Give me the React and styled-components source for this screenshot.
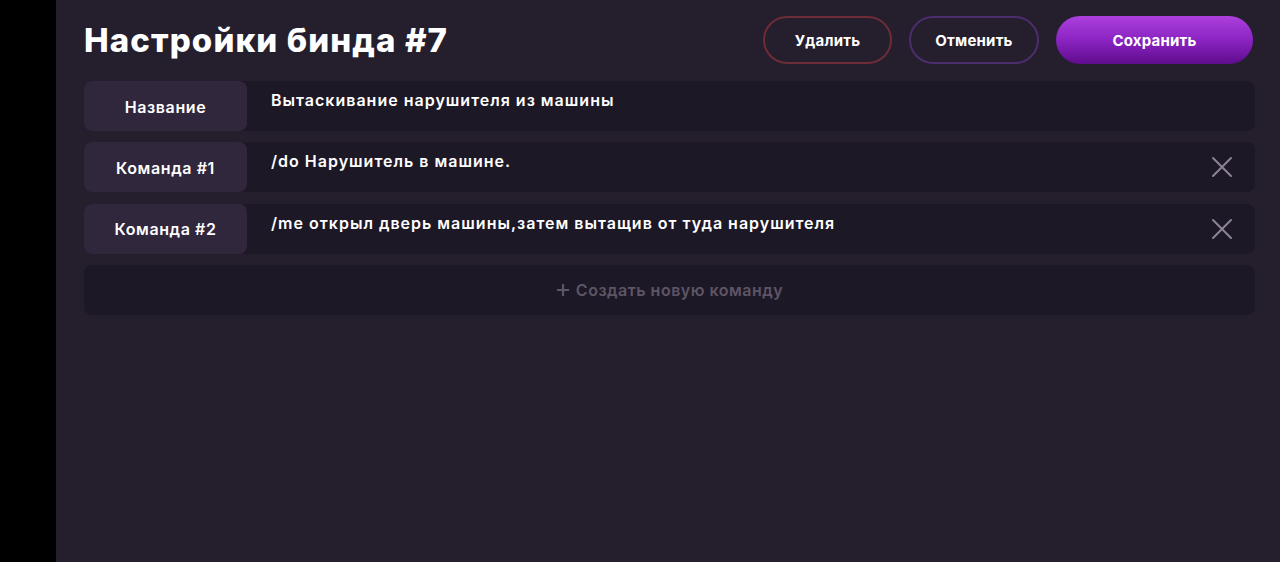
import React from "react"
import styled, { createGlobalStyle } from "styled-components"

const Global = createGlobalStyle`
  html, body, #root { margin: 0; height: 100%; }
  body {
    background: #000;
    font-family: Inter, "Noto Sans", sans-serif;
    color: #fff;
    overflow: hidden;
  }
`

const Screen = styled.div`
  display: flex;
  height: 562px;
`

const SideBar = styled.div`
  width: 56px;
  flex-shrink: 0;
  background: #000;
`

const Page = styled.main`
  flex: 1;
  background: #241e2d;
  padding: 16px 25px 0 28px;
  display: flex;
  flex-direction: column;
`

const Header = styled.header`
  display: flex;
  align-items: center;
  justify-content: space-between;
  height: 48px;
  margin-bottom: 17px;
`

const Title = styled.h1`
  margin: 0;
  font-size: 33px;
  font-weight: 800;
  letter-spacing: 1.1px;
  color: #fff;
`

const Actions = styled.div`
  display: flex;
  gap: 17px;
  margin-right: 2px;
`

const Button = styled.button`
  height: 48px;
  width: ${p => p.$w}px;
  border-radius: 24px;
  font-family: inherit;
  font-size: 15px;
  font-weight: 700;
  letter-spacing: 0.2px;
  color: #fff;
  cursor: pointer;
  border: 2px solid ${p => p.$border || "transparent"};
  background: ${p => p.$bg || "transparent"};
  background-origin: border-box;
`

const List = styled.div`
  display: flex;
  flex-direction: column;
  gap: 11.4px;
`

const Row = styled.div`
  display: flex;
  align-items: stretch;
  height: 50px;
  background: #1d1826;
  border-radius: 8px;
`

const Label = styled.div`
  width: 163px;
  flex-shrink: 0;
  background: #31273d;
  border-radius: 8px;
  display: flex;
  align-items: center;
  justify-content: center;
  padding-top: 1px;
  font-size: 16px;
  font-weight: 600;
  letter-spacing: 0.6px;
  color: #fff;
`

const Value = styled.div`
  flex: 1;
  padding: 9px 24px 0 24px;
  font-size: 16px;
  font-weight: 600;
  letter-spacing: 1px;
  color: #fff;
`

const Remove = styled.button`
  width: 50px;
  margin-right: 8px;
  background: none;
  border: none;
  display: flex;
  align-items: center;
  justify-content: center;
  cursor: pointer;
`

const AddRow = styled.div`
  height: 50px;
  background: #1d1826;
  border-radius: 8px;
  display: flex;
  align-items: center;
  justify-content: center;
  gap: 6px;
  font-size: 16px;
  font-weight: 600;
  letter-spacing: 0.5px;
  color: #5d5566;
`

const Cross = () => (
  <svg width="22" height="22" viewBox="0 0 22 22">
    <path d="M2 2 L20 20 M20 2 L2 20" stroke="#8c8397" strokeWidth="2" strokeLinecap="round" />
  </svg>
)

const Plus = () => (
  <svg width="14" height="14" viewBox="0 0 14 14">
    <path d="M7 1 V13 M1 7 H13" stroke="#5d5566" strokeWidth="2.2" />
  </svg>
)

const rows = [
  { label: "Название", value: "Вытаскивание нарушителя из машины" },
  { label: "Команда #1", value: "/do Нарушитель в машине.", removable: true },
  { label: "Команда #2", value: "/me открыл дверь машины,затем вытащив от туда нарушителя", removable: true },
]

export default function App() {
  return (
    <>
      <Global />
      <Screen>
        <SideBar />
        <Page>
          <Header>
            <Title>Настройки бинда #7</Title>
            <Actions>
              <Button $w={129} $border="#6e2c37">Удалить</Button>
              <Button $w={130} $border="#4c2d70">Отменить</Button>
              <Button $w={197} $bg="linear-gradient(180deg, #ad40dd 0%, #8a24c2 50%, #5f0c8c 100%)">Сохранить</Button>
            </Actions>
          </Header>
          <List>
            {rows.map(r => (
              <Row key={r.label}>
                <Label>{r.label}</Label>
                <Value>{r.value}</Value>
                {r.removable && (
                  <Remove>
                    <Cross />
                  </Remove>
                )}
              </Row>
            ))}
            <AddRow>
              <Plus />
              Создать новую команду
            </AddRow>
          </List>
        </Page>
      </Screen>
    </>
  )
}
